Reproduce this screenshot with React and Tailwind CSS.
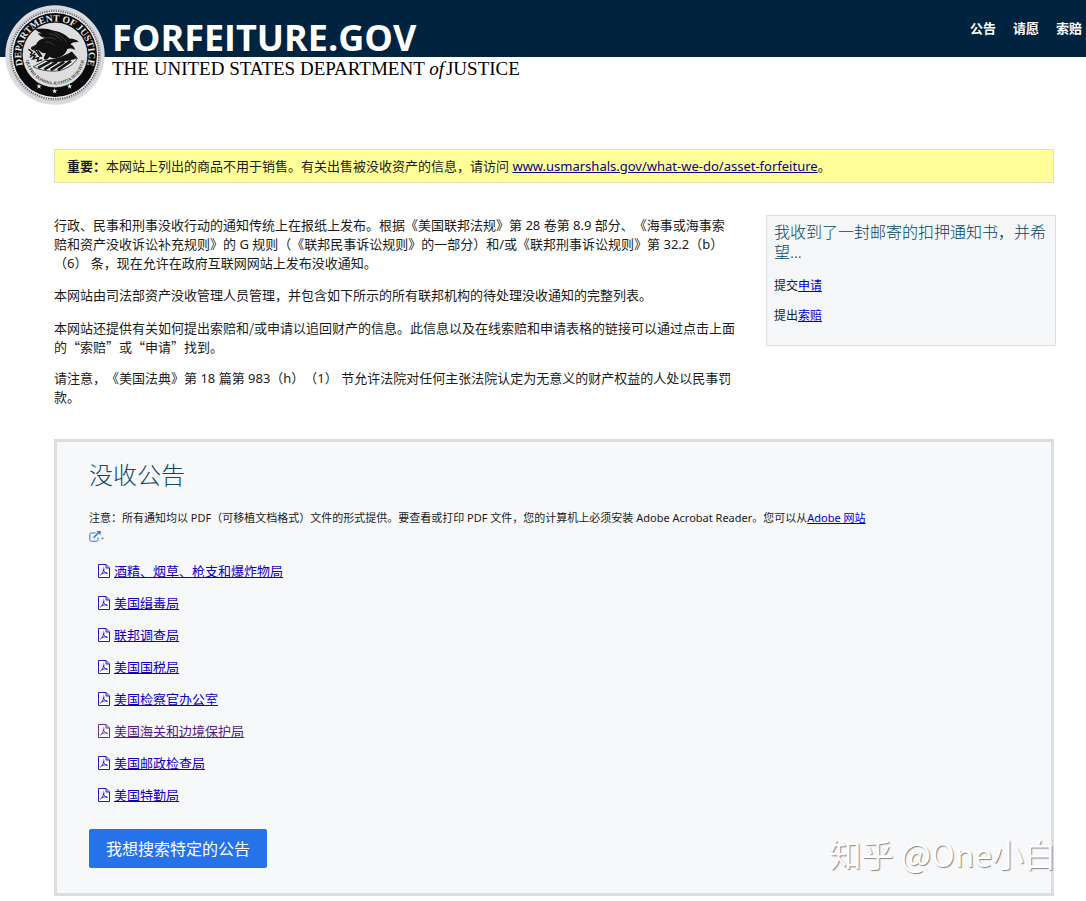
import React from 'react';

const agencies = [
  { name: '酒精、烟草、枪支和爆炸物局' },
  { name: '美国缉毒局' },
  { name: '联邦调查局' },
  { name: '美国国税局' },
  { name: '美国检察官办公室' },
  { name: '美国海关和边境保护局', visited: true },
  { name: '美国邮政检查局' },
  { name: '美国特勤局' },
];

const navItems = ['公告', '请愿', '索赔'];

const Star = ({ x, y }) => (
  <path
    transform={`translate(${x} ${y})`}
    d="M0-8 2-2.5 8-2.5 3 1.2 5 7 0 3.500-5 7-3 1.200-8-2.500-2-2.500Z"
    fill="#f2f2f2"
  />
);

const Seal = () => (
  <svg viewBox="14 14 300 300" className="w-[100px] h-[100px]" role="img" aria-label="Department of Justice">
    <defs>
      <path id="ring-top" d="M80 220A101 101 0 1 1 248 220" />
      <path id="ring-motto" d="M78 141A89 89 0 1 0 250 141" />
    </defs>
    <circle cx="164" cy="164" r="149" fill="#d9dbe0" />
    <circle cx="164" cy="164" r="137" fill="#e9e9e9" stroke="#a6a6a8" strokeWidth="2" />
    <circle cx="164" cy="164" r="132" fill="none" stroke="#5c5c5e" strokeWidth="5" strokeDasharray="4 3" />
    <circle cx="164" cy="164" r="126" fill="#0b0b0c" />
    <circle cx="164" cy="164" r="96" fill="#dedee0" stroke="#fff" strokeWidth="2" />
    <text fontFamily='"Liberation Serif", serif' fontSize="29" fontWeight="bold" fill="#e8e8e8">
      <textPath href="#ring-top" startOffset="50%" textAnchor="middle">DEPARTMENT OF JUSTICE</textPath>
    </text>
    <text fontFamily='"Liberation Serif", serif' fontSize="13" fontWeight="bold" fill="#333">
      <textPath href="#ring-motto" startOffset="50%" textAnchor="middle">QUI PRO DOMINA JUSTITIA SEQUITUR</textPath>
    </text>
    <g transform="translate(-21 -19) scale(1.12)">
      {/* eagle */}
      <path
        d="M112 94C130 91 148 93 160 98C177 100 193 108 203 119C215 119 224 122 229 129C218 128 211 130 207 135C215 138 218 144 219 150C210 145 202 145 198 147C196 156 188 165 178 169C168 174 158 173 151 168L144 175C138 178 133 174 136 169L141 158C133 160 126 155 121 149L109 151C103 151 99 146 102 142L114 136C119 125 128 119 139 118C130 116 123 111 119 105L130 106C122 103 116 99 112 94Z"
        fill="#111"
      />
      <path d="M139 118C150 115 162 117 170 124M150 106C164 108 176 115 184 125M163 103C178 109 189 117 196 128M140 130C149 127 158 131 162 138" fill="none" stroke="#4a4a4d" strokeWidth="2" />
      <path d="M94 148 104 156 100 162 112 166 106 174 121 171 118 180 131 176M98 170 112 158M108 146 126 168M118 150 130 168" fill="none" stroke="#1a1a1a" strokeWidth="4" />
      {/* shield */}
      <path d="M139 178C162 176 187 170 210 155L225 172C216 188 200 199 178 205C153 209 127 205 107 195Z" fill="#e4e4e6" stroke="#151515" strokeWidth="2" />
      <path d="M139 178C162 176 187 170 210 155L225 172C205 180 178 182 151 183Z" fill="#151515" />
      <path d="M120 198 151 181M137 202 171 181M154 204 190 181M173 204 208 179" stroke="#151515" strokeWidth="7" />
    </g>
    <Star x={116} y={258} />
    <Star x={163} y={272} />
    <Star x={208} y={258} />
  </svg>
);

const PdfIcon = () => (
  <svg viewBox="0 0 12 14" className="w-3 h-[14px] shrink-0" fill="none" stroke="currentColor" aria-hidden="true">
    <path d="M.5.5H8L11.500 4V13.500H.5ZM8 .5V4H11.500" strokeWidth=".9" />
    <path
      d="M5.500 3.500C6.500 4.500 5.500 7 4.500 8.700C3.700 10.200 2.700 11.500 2.200 11M5.400 5.500C5.800 7.500 7 9 9.700 9.500M3.600 9.800C5.300 8.900 7.300 8.700 9.500 9.200"
      strokeWidth=".8"
    />
  </svg>
);

const ExternalIcon = () => (
  <svg viewBox="0 0 12 11" className="inline w-3 h-[11px] text-[#2672de]" fill="none" stroke="currentColor" aria-hidden="true">
    <path d="M6.500 2H2.200C1.200 2 .8 2.600.8 3.300V8.700C.8 9.600 1.400 10.200 2.200 10.200H7.500C8.500 10.200 9 9.600 9 8.700V6.500" />
    <path d="M4.500 6.700 9.500 1.700" strokeWidth="1.500" />
    <path d="M7.500 0H11.700V4.200Z" fill="currentColor" stroke="none" />
  </svg>
);

const Header = () => (
  <header className="relative">
    <div className="flex h-[57px] items-center justify-between bg-[#00243f] pl-28 pr-1 text-white">
      <div className="pt-[18px] font-['Open_Sans','Noto_Sans',sans-serif] text-[36px] leading-[38px] font-bold">
        FORFEITURE.GOV
      </div>
      <nav className="flex gap-[17px] text-[13px] font-bold">
        {navItems.map((item) => (
          <a key={item} href="#">{item}</a>
        ))}
      </nav>
    </div>
    <div className="pl-28 font-['Liberation_Serif',serif] text-[19px] leading-6 text-black">
      THE UNITED STATES DEPARTMENT <i className="mr-0.5">of</i>JUSTICE
    </div>
    <a href="#" className="absolute left-[5px] top-[5px]">
      <Seal />
    </a>
  </header>
);

const Intro = () => (
  <div className="mr-[30px] mt-8 flex items-start justify-between">
    <div className="max-w-[682px] space-y-[13px] pt-px text-[13px] leading-[19px]">
      <p>
        行政、民事和刑事没收行动的通知传统上在报纸上发布。根据《美国联邦法规》第 28 卷第 8.9 部分、《海事或海事索赔和资产没收诉讼补充规则》的 G 规则（《联邦民事诉讼规则》的一部分）和/或《联邦刑事诉讼规则》第 32.2（b）（6） 条，现在允许在政府互联网网站上发布没收通知。
      </p>
      <p>本网站由司法部资产没收管理人员管理，并包含如下所示的所有联邦机构的待处理没收通知的完整列表。</p>
      {/* CJK font first, so the quotes are full width */}
      <p className="font-['Noto_Sans_CJK_SC',sans-serif]">
        本网站还提供有关如何提出索赔和/或申请以追回财产的信息。此信息以及在线索赔和申请表格的链接可以通过点击上面的“索赔”或“申请”找到。
      </p>
      <p>
        请注意，《美国法典》第 18 篇第 983（h）（1） 节允许法院对任何主张法院认定为无意义的财产权益的人处以民事罚款。
      </p>
    </div>
    <aside className="w-[290px] shrink-0 border border-[#dcdee0] bg-[#f5f6f8] px-[7px] pt-[6px] pb-[19px] text-xs">
      <h2 className="text-base leading-5 font-light text-[#00456a]">我收到了一封邮寄的扣押通知书，并希望...</h2>
      <p className="mt-[14px] leading-5">
        提交<a href="#" className="text-[#0000cc] underline">申请</a>
      </p>
      <p className="mt-[10px] leading-5">
        提出<a href="#" className="text-[#0000cc] underline">索赔</a>
      </p>
    </aside>
  </div>
);

const Notices = () => (
  <section className="relative mr-8 mt-8 border-[3px] border-[#dcdddf] bg-[#f6f8fa] px-8 pt-[17px] pb-[25px]">
    <h1 className="text-2xl leading-8 font-light text-[#0b4a6c]">没收公告</h1>
    <p className="mt-[18px] max-w-[788px] text-[11px] leading-[17px]">
      注意：所有通知均以 PDF（可移植文档格式）文件的形式提供。要查看或打印 PDF 文件，您的计算机上必须安装 Adobe Acrobat Reader。您可以从
      <a href="#" className="text-[#0000cc] underline">Adobe 网站</a> <ExternalIcon />.
    </p>
    <ul className="mt-[18px] space-y-3 pl-[9px] text-[13px] leading-5">
      {agencies.map((agency) => (
        <li key={agency.name}>
          <a
            href="#"
            className={`inline-flex items-center gap-1 align-top ${agency.visited ? 'text-[#551a8b]' : 'text-[#1100bb]'}`}
          >
            <PdfIcon />
            <span className="underline">{agency.name}</span>
          </a>
        </li>
      ))}
    </ul>
    <button className="mt-6 block h-[39px] rounded-xs bg-[#2672e8] px-[17px] text-base text-white">
      我想搜索特定的公告
    </button>
    <div className="pointer-events-none absolute -right-[5px] bottom-4 font-['Noto_Sans_CJK_SC',sans-serif] text-[32px] leading-[48px] text-white [text-shadow:1px_1px_1px_#888]">
      知乎 @One小白
    </div>
  </section>
);

export default function App() {
  return (
    <div
      className="min-h-screen bg-white pb-[5px] font-['Noto_Sans','Noto_Sans_CJK_SC',sans-serif] text-[#1b1b1b] [text-spacing-trim:space-all]"
      lang="zh-CN"
    >
      <Header />
      <main className="pl-[54px] pt-[68px]">
        <div className="mr-8 border border-[#dddfc4] bg-[#ffff99] px-3 py-[6px] text-[13px] leading-5">
          <b>重要：</b>本网站上列出的商品不用于销售。有关出售被没收资产的信息，请访问{' '}
          <a href="#" className="text-[#0b0080] underline">www.usmarshals.gov/what-we-do/asset-forfeiture</a>。
        </div>
        <Intro />
        <Notices />
      </main>
    </div>
  );
}
